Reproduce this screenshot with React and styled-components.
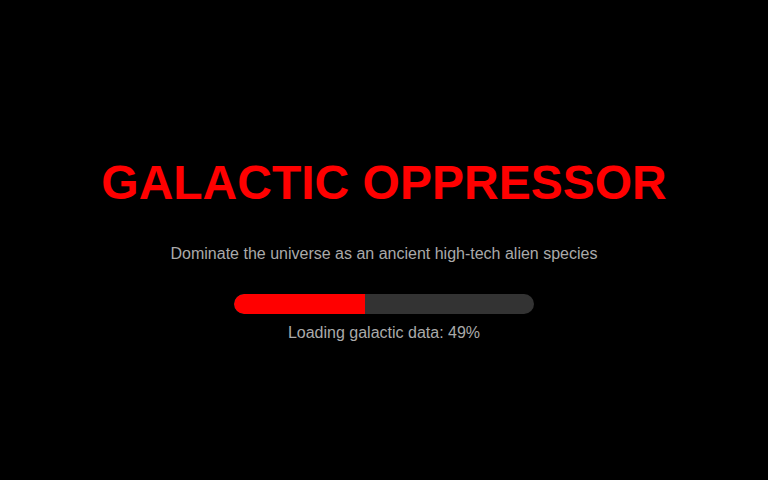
import React from "react";
import styled, { createGlobalStyle } from "styled-components";

const Global = createGlobalStyle`
  html, body { margin: 0; padding: 0; background: #000; }
  body { font-family: "Liberation Sans", Arial, sans-serif; }
`;

const Screen = styled.main`
  box-sizing: border-box;
  width: 768px;
  height: 480px;
  padding-top: 15px;
  display: flex;
  flex-direction: column;
  align-items: center;
  justify-content: center;
  background: #000;
  text-align: center;
`;

const Title = styled.h1`
  margin: 3px 0 33px;
  font-size: 48px;
  font-weight: 700;
  line-height: 56px;
  color: #ff0000;
`;

const Tagline = styled.p`
  margin: 0 0 30px;
  font-size: 16px;
  line-height: 20px;
  color: #aaaaaa;
`;

const Track = styled.div`
  width: 300px;
  height: 20px;
  border-radius: 10px;
  background: #333333;
  overflow: hidden;
`;

const Fill = styled.div`
  height: 100%;
  background: #ff0000;
  border-radius: 10px 0 0 10px;
`;

const Status = styled.p`
  margin: 9px 0 0;
  font-size: 16px;
  line-height: 20px;
  color: #aaaaaa;
`;

export default function App() {
  const progress = 49;
  const barWidth = 131;
  return (
    <>
      <Global />
      <Screen>
        <Title>GALACTIC OPPRESSOR</Title>
        <Tagline>Dominate the universe as an ancient high-tech alien species</Tagline>
        <Track>
          <Fill style={{ width: `${barWidth}px` }} />
        </Track>
        <Status>Loading galactic data: {progress}%</Status>
      </Screen>
    </>
  );
}
